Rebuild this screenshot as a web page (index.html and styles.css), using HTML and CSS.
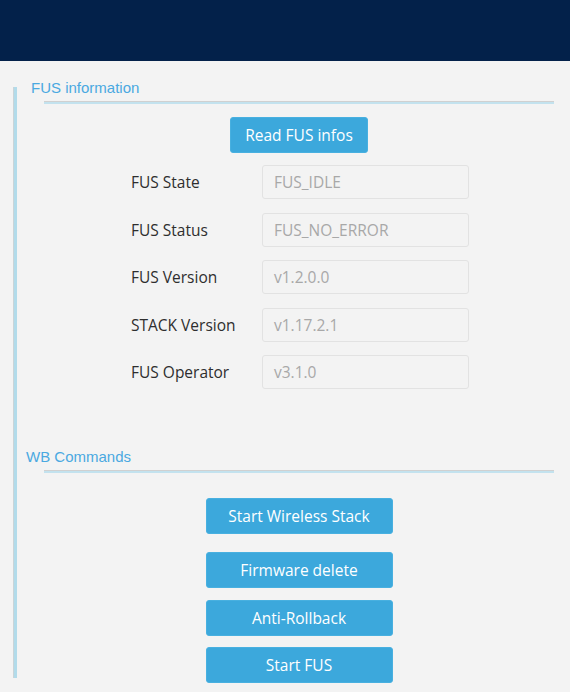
FILE: index.html
```html
<!DOCTYPE html>
<html>
<head>
<meta charset="utf-8">
<link rel="stylesheet" href="styles.css">
</head>
<body>
<header class="topbar"></header>
<main class="panel">
  <div class="rail"></div>
  <div class="content">
    <h2 class="section-title fus-title">FUS information</h2>
    <div class="divider"></div>
    <div class="btn-row read-row">
      <button class="btn btn-read">Read FUS infos</button>
    </div>
    <div class="info-grid">
      <div class="label">FUS State</div>
      <div class="field">FUS_IDLE</div>
      <div class="label">FUS Status</div>
      <div class="field">FUS_NO_ERROR</div>
      <div class="label">FUS Version</div>
      <div class="field">v1.2.0.0</div>
      <div class="label">STACK Version</div>
      <div class="field">v1.17.2.1</div>
      <div class="label">FUS Operator</div>
      <div class="field">v3.1.0</div>
    </div>
    <h2 class="section-title wb-title">WB Commands</h2>
    <div class="divider"></div>
    <div class="cmd-list">
      <button class="btn btn-cmd btn-first">Start Wireless Stack</button>
      <button class="btn btn-cmd">Firmware delete</button>
      <button class="btn btn-cmd">Anti-Rollback</button>
      <button class="btn btn-cmd">Start FUS</button>
    </div>
  </div>
</main>
</body>
</html>
```
FILE: styles.css
```css
html, body {
  margin: 0;
  padding: 0;
  background: #f3f3f3;
}
body {
  width: 570px;
  height: 692px;
  overflow: hidden;
  font-family: "Open Sans", "Noto Sans", sans-serif;
}
.topbar {
  height: 61px;
  background: #03214a;
}
.panel {
  display: flex;
  align-items: flex-start;
}
.rail {
  margin-left: 13px;
  margin-top: 26px;
  width: 3px;
  height: 591px;
  background: #b2dbea;
  border-left: 1px solid #c9d4d8;
  flex: none;
}
.content {
  padding-top: 18px;
  width: 537px;
}
.section-title {
  margin: 0;
  font-family: "Liberation Sans", Arial, sans-serif;
  font-weight: normal;
  font-size: 15px;
  line-height: 17px;
  color: #4aa9e1;
}
.fus-title { padding-left: 14px; }
.wb-title { padding-left: 9px; margin-top: 59px; }
.divider {
  margin-left: 27px;
  margin-top: 5px;
  width: 510px;
  height: 2px;
  border-top: 1px solid #d0d0d0;
  background: #c3e2ee;
}
.btn-row {
  margin-left: 27px;
  width: 510px;
  display: flex;
  justify-content: center;
}
.read-row { margin-top: 13px; }
.btn {
  font-family: "Open Sans", "Noto Sans", sans-serif;
  font-size: 15.5px;
  color: #ffffff;
  background: #3ca8dc;
  border: 1px solid #48b0e0;
  border-radius: 3px;
  height: 36px;
  padding: 0;
  margin: 0;
}
.btn-read { width: 138px; }
.info-grid {
  margin-top: 12px;
  margin-left: 27px;
  padding-left: 87px;
  display: grid;
  grid-template-columns: 131px 207px;
  grid-auto-rows: 34px;
  row-gap: 13.5px;
  align-items: center;
}
.label {
  font-size: 15.5px;
  color: #2e2e2e;
}
.field {
  box-sizing: border-box;
  height: 34px;
  border: 1px solid #e2e2e2;
  border-radius: 3px;
  background: #f3f3f3;
  padding-left: 11px;
  display: flex;
  align-items: center;
  font-size: 15.5px;
  color: #a8a8a8;
}
.cmd-list {
  margin-left: 27px;
  width: 510px;
  display: flex;
  flex-direction: column;
  align-items: center;
  margin-top: 25px;
  gap: 11.5px;
}
.btn-cmd { width: 187px; }
.btn-first { margin-bottom: 6.5px; }
```
